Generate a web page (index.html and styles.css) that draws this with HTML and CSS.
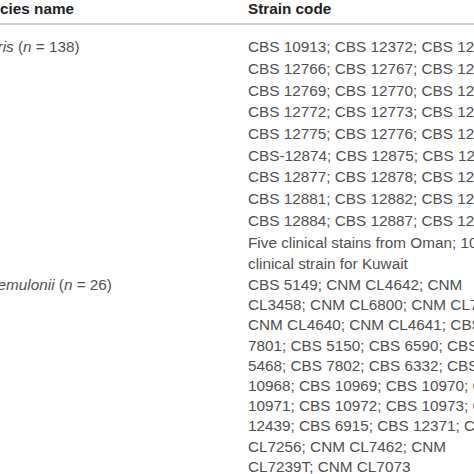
FILE: index.html
```html
<!DOCTYPE html>
<html>
<head>
<meta charset="utf-8">
<link rel="stylesheet" href="styles.css">
</head>
<body>
<div class="table">
  <div class="head">
    <div class="cell species head-species">Species name</div>
    <div class="cell">Strain code</div>
  </div>
  <div class="row first-row">
    <div class="cell species"><i>C. auris</i> (<i>n</i> = 138)</div>
    <div class="cell codes">CBS 10913; CBS 12372; CBS 12373; CBS 12765;<br>CBS 12766; CBS 12767; CBS 12768;<br>CBS 12769; CBS 12770; CBS 12771;<br>CBS 12772; CBS 12773; CBS 12774;<br>CBS 12775; CBS 12776; CBS 12777;<br>CBS-12874; CBS 12875; CBS 12876;<br>CBS 12877; CBS 12878; CBS 12880;<br>CBS 12881; CBS 12882; CBS 12883;<br>CBS 12884; CBS 12887; CBS 12888;<br>Five clinical stains from Oman; 105<br>clinical strain for Kuwait</div>
  </div>
  <div class="row second-row">
    <div class="cell species"><i>C. haemulonii</i> (<i>n</i> = 26)</div>
    <div class="cell codes">CBS 5149; CNM CL4642; CNM<br>CL3458; CNM CL6800; CNM CL7<br>CNM CL4640; CNM CL4641; CBS<br>7801; CBS 5150; CBS 6590; CBS<br>5468; CBS 7802; CBS 6332; CBS<br>10968; CBS 10969; CBS 10970; CBS<br>10971; CBS 10972; CBS 10973; CBS<br>12439; CBS 6915; CBS 12371; CNM<br>CL7256; CNM CL7462; CNM<br>CL7239T; CNM CL7073</div>
  </div>
</div>
</body>
</html>
```

FILE: styles.css
```css
html, body {
  margin: 0;
  padding: 0;
  background: #ffffff;
  overflow: hidden;
}
body {
  width: 474px;
  height: 474px;
  font-family: "Liberation Sans", Arial, sans-serif;
  font-size: 15.3px;
  line-height: 21.7px;
  color: #505050;
}
.table {
  margin-top: -2px;
}
.head, .row {
  display: grid;
  grid-template-columns: 287px 1fr;
  margin-left: -39px;
  white-space: nowrap;
}
.head {
  font-weight: bold;
  color: #1e1e1e;
  padding-bottom: 3.5px;
  border-bottom: 2px solid #cfcfcf;
}
.head-species {
  padding-left: 11px;
}
.first-row {
  padding-top: 11px;
}
.second-row {
  line-height: 20.2px;
}
```
